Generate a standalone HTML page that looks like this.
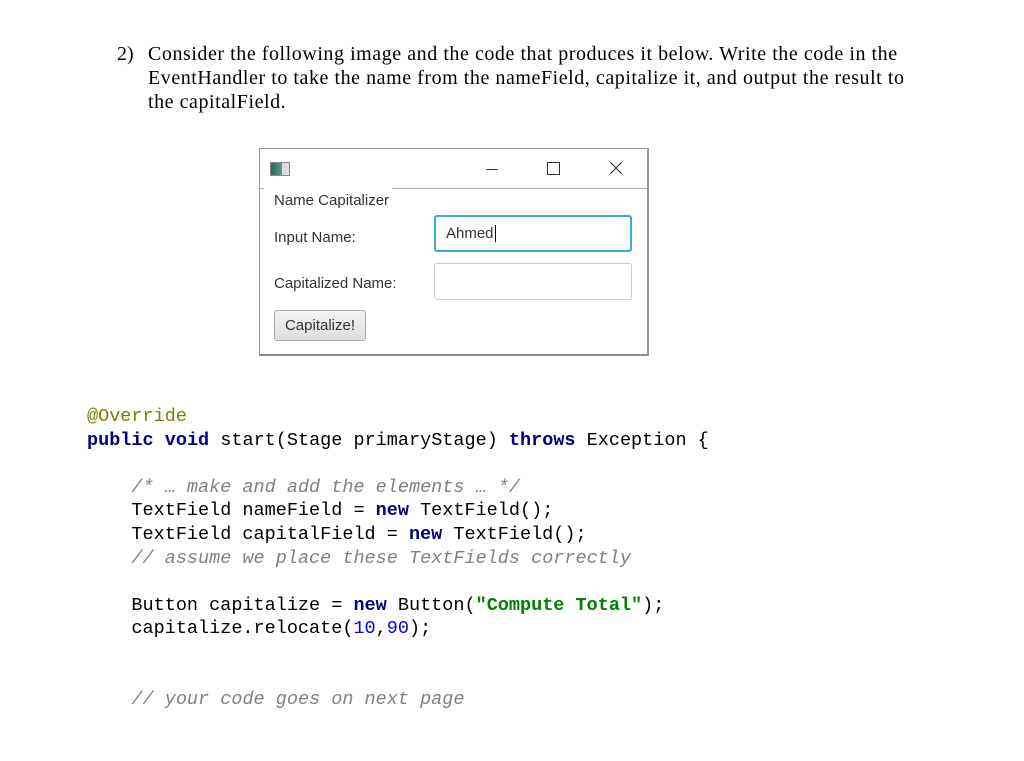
<!DOCTYPE html>
<html><head><style>
body{margin:0;width:1024px;height:761px;background:#fff;position:relative;overflow:hidden;font-family:"Liberation Serif",serif}
.q{position:absolute;left:148px;top:42px;font-size:20px;line-height:24px;color:#000;width:860px;white-space:nowrap;letter-spacing:0.55px}
.n{position:absolute;left:117px;top:42px;font-size:20px;line-height:24px}
.win{position:absolute;left:259px;top:148px;width:387px;height:205px;border:1px solid #999;border-bottom:2px solid #888;border-right:2px solid #999;background:#fff;font-family:"Liberation Sans",sans-serif;font-size:15px;color:#333}
.tb{position:absolute;left:0;top:0;width:387px;height:39px;border-bottom:1px solid #aaa}
.ic{position:absolute;left:10px;top:13px;width:18px;height:12px;background:linear-gradient(90deg,#2a6a5a,#5a9a8a 60%,#ddd 60%);border:1px solid #888}
.lab{position:absolute}
.tf{position:absolute;left:174px;width:198px;height:37px;border:1px solid #ccc;border-radius:3px;box-sizing:border-box}
.btn{position:absolute;left:14px;top:161px;width:92px;height:31px;box-sizing:border-box;border:1px solid #aaa;border-radius:3px;background:linear-gradient(#f4f4f4,#ddd);text-align:center;line-height:29px}
pre{position:absolute;margin:0;font-family:"Liberation Mono",monospace;font-size:18.5px;line-height:23.6px;color:#000}
.k{color:#000080;font-weight:bold}.c{color:#808080;font-style:italic}.s{color:#008000;font-weight:bold}.a{color:#808000}.num{color:#0000ff}
</style></head><body>
<div class="n">2)</div>
<div class="q">Consider the following image and the code that produces it below. Write the code in the<br>EventHandler to take the name from the nameField, capitalize it, and output the result to<br>the capitalField.</div>
<div class="win">
 <div class="tb"><div class="ic"></div>
  <div style="position:absolute;left:226px;top:20px;width:12px;height:1px;background:#333"></div>
  <div style="position:absolute;left:287px;top:13px;width:11px;height:11px;border:1px solid #333"></div>
  <svg style="position:absolute;left:349px;top:12px" width="14" height="14"><path d="M1 1L13 13M13 1L1 13" stroke="#333" stroke-width="1.2"/></svg>
 </div>
 <div style="position:absolute;left:4px;top:39px;width:128px;height:2px;background:#fff"></div>
 <div class="lab" style="left:14px;top:43px">Name Capitalizer</div>
 <div class="lab" style="left:14px;top:80px">Input Name:</div>
 <div class="tf" style="top:66px;border:2px solid #3aa8d8;padding:9px 10px;line-height:16px">Ahmed<span style="border-left:1px solid #000;margin-left:1px"></span></div>
 <div class="lab" style="left:14px;top:126px">Capitalized Name:</div>
 <div class="tf" style="top:114px"></div>
 <div class="btn">Capitalize!</div>
</div>
<pre style="left:87px;top:405px"><span class="a">@Override</span>
<span class="k">public</span> <span class="k">void</span> start(Stage primaryStage) <span class="k">throws</span> Exception {

    <span class="c">/* … make and add the elements … */</span>
    TextField nameField = <span class="k">new</span> TextField();
    TextField capitalField = <span class="k">new</span> TextField();
    <span class="c">// assume we place these TextFields correctly</span>

    Button capitalize = <span class="k">new</span> Button(<span class="s">"Compute Total"</span>);
    capitalize.relocate(<span class="num">10</span>,<span class="num">90</span>);


    <span class="c">// your code goes on next page</span></pre>
</body></html>
